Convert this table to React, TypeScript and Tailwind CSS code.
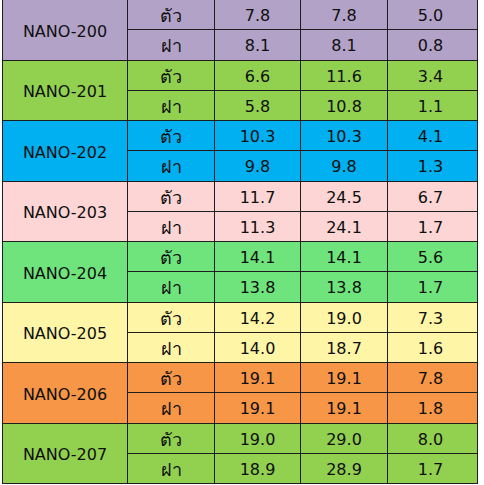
import React from "react";

type Group = { name: string; bg: string; rows: [string, string, string, string][] };

const groups: Group[] = [
  { name: "NANO-200", bg: "bg-[#b3a2c7]", rows: [["ตัว", "7.8", "7.8", "5.0"], ["ฝา", "8.1", "8.1", "0.8"]] },
  { name: "NANO-201", bg: "bg-[#92d050]", rows: [["ตัว", "6.6", "11.6", "3.4"], ["ฝา", "5.8", "10.8", "1.1"]] },
  { name: "NANO-202", bg: "bg-[#00b0f0]", rows: [["ตัว", "10.3", "10.3", "4.1"], ["ฝา", "9.8", "9.8", "1.3"]] },
  { name: "NANO-203", bg: "bg-[#fcd5d4]", rows: [["ตัว", "11.7", "24.5", "6.7"], ["ฝา", "11.3", "24.1", "1.7"]] },
  { name: "NANO-204", bg: "bg-[#70e47c]", rows: [["ตัว", "14.1", "14.1", "5.6"], ["ฝา", "13.8", "13.8", "1.7"]] },
  { name: "NANO-205", bg: "bg-[#fff5a6]", rows: [["ตัว", "14.2", "19.0", "7.3"], ["ฝา", "14.0", "18.7", "1.6"]] },
  { name: "NANO-206", bg: "bg-[#f79646]", rows: [["ตัว", "19.1", "19.1", "7.8"], ["ฝา", "19.1", "19.1", "1.8"]] },
  { name: "NANO-207", bg: "bg-[#92d050]", rows: [["ตัว", "19.0", "29.0", "8.0"], ["ฝา", "18.9", "28.9", "1.7"]] },
];

const widths = ["w-[87px] text-[18px]", "w-[86px]", "w-[87px]", "w-[85px]"];

export default function App() {
  return (
    <div className="w-[484px] h-[485px] bg-white overflow-hidden">
      <div
        className="ml-[2px] mt-[-1px] w-[476px] border-l border-r border-b border-[#1e1e1e] flex flex-col text-[#0f0f0f] text-[16px]"
        style={{ fontFamily: '"DejaVu Sans", Tahoma, "Noto Sans", sans-serif' }}
      >
        {groups.map((g) => (
          <div key={g.name} className={`flex h-[60.5px] border-t border-[#1e1e1e] ${g.bg}`}>
            <div className="w-[125px] border-r border-[#1e1e1e] flex items-center justify-center pt-[4px]">
              {g.name}
            </div>
            <div className="flex-1 flex flex-col">
              {g.rows.map((r, i) => (
                <div key={i} className={`flex flex-1 ${i === 1 ? "border-t border-[#1e1e1e]" : ""}`}>
                  {r.map((c, j) => (
                    <div
                      key={j}
                      className={`${widths[j]} ${j < 3 ? "border-r border-[#1e1e1e]" : ""} flex items-center justify-center pt-[3px] leading-none`}
                    >
                      {c}
                    </div>
                  ))}
                </div>
              ))}
            </div>
          </div>
        ))}
      </div>
    </div>
  );
}
